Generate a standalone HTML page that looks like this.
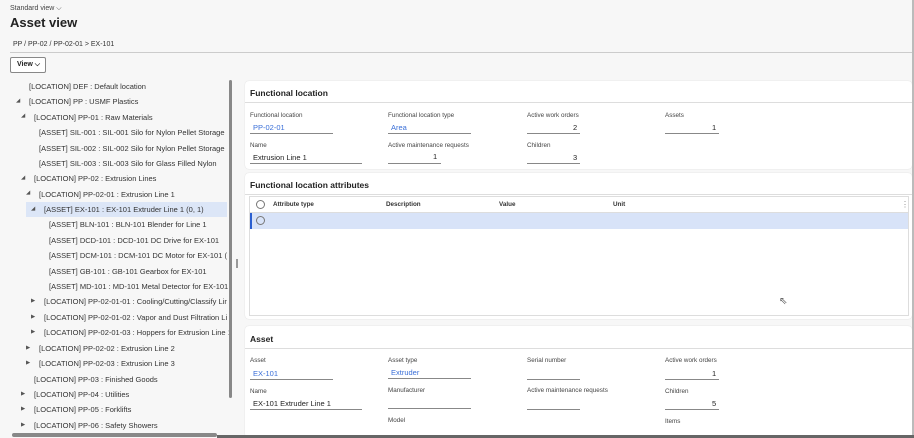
<!DOCTYPE html>
<html><head><meta charset="utf-8"><style>
*{box-sizing:border-box;margin:0;padding:0}
body{width:914px;height:438px;overflow:hidden;background:#f5f5f5;font-family:"Liberation Sans",sans-serif;color:#222;position:relative}
.a{position:absolute;white-space:nowrap}
.tr{font-size:7.5px;color:#333}
.ar{font-size:5.5px;color:#555}
.panel{position:absolute;background:#fff;border-radius:4px;box-shadow:0 0 1px #ccc}
.ph{position:absolute;left:0;right:0;border-bottom:1px solid #ddd}
.h{font-size:8.5px;font-weight:bold;color:#222}
.lb{font-size:6.3px;color:#444}
.ul{position:absolute;border-bottom:1px solid #888;height:0}
.v{font-size:7.5px}
.bl{color:#3a6fd8}
.gh{font-size:6.3px;font-weight:bold;color:#333}
.rc{position:absolute;width:9px;height:9px;border:1px solid #777;border-radius:50%}
</style></head><body>
<div class="a" style="left:0;top:0;width:914px;height:438px;background:#f7f7f7"></div>
<div class="a" style="left:10px;top:5px;font-size:7px;color:#444">Standard view ⌵</div>
<div class="a" style="left:10px;top:15px;font-size:13px;font-weight:bold">Asset view</div>
<div class="a" style="left:13px;top:41px;font-size:7px;color:#333">PP / PP-02 / PP-02-01 &gt; EX-101</div>
<div class="a" style="left:10px;top:52px;width:904px;border-top:1px solid #ccc"></div>
<div class="a" style="left:10px;top:57px;width:36px;height:16px;border:1px solid #888;border-radius:2px;background:#fff;font-size:7px;font-weight:bold;padding:3px 0 0 6px">View ⌵</div>

<div class="a" style="left:26px;top:202px;width:201px;height:15px;background:#dce6f7"></div>
<div class="a tr" style="left:29px;top:82px">[LOCATION] DEF : Default location</div>
<div class="a ar" style="left:16px;top:98px">◢</div><div class="a tr" style="left:29px;top:97px">[LOCATION] PP : USMF Plastics</div>
<div class="a ar" style="left:21px;top:113px">◢</div><div class="a tr" style="left:34px;top:113px">[LOCATION] PP-01 : Raw Materials</div>
<div class="a tr" style="left:39px;top:128px">[ASSET] SIL-001 : SIL-001 Silo for Nylon Pellet Storage</div>
<div class="a tr" style="left:39px;top:144px">[ASSET] SIL-002 : SIL-002 Silo for Nylon Pellet Storage</div>
<div class="a tr" style="left:39px;top:159px">[ASSET] SIL-003 : SIL-003 Silo for Glass Filled Nylon</div>
<div class="a ar" style="left:21px;top:175px">◢</div><div class="a tr" style="left:34px;top:174px">[LOCATION] PP-02 : Extrusion Lines</div>
<div class="a ar" style="left:26px;top:190px">◢</div><div class="a tr" style="left:39px;top:190px">[LOCATION] PP-02-01 : Extrusion Line 1</div>
<div class="a ar" style="left:31px;top:206px">◢</div><div class="a tr" style="left:44px;top:205px">[ASSET] EX-101 : EX-101 Extruder Line 1 (0, 1)</div>
<div class="a tr" style="left:49px;top:220px">[ASSET] BLN-101 : BLN-101 Blender for Line 1</div>
<div class="a tr" style="left:49px;top:236px">[ASSET] DCD-101 : DCD-101 DC Drive for EX-101</div>
<div class="a tr" style="left:49px;top:251px;width:178px;overflow:hidden">[ASSET] DCM-101 : DCM-101 DC Motor for EX-101 (1, 1)</div>
<div class="a tr" style="left:49px;top:267px">[ASSET] GB-101 : GB-101 Gearbox for EX-101</div>
<div class="a tr" style="left:49px;top:282px">[ASSET] MD-101 : MD-101 Metal Detector for EX-101</div>
<div class="a ar" style="left:31px;top:298px">▶</div><div class="a tr" style="left:44px;top:297px;width:183px;overflow:hidden">[LOCATION] PP-02-01-01 : Cooling/Cutting/Classify Line 1</div>
<div class="a ar" style="left:31px;top:314px">▶</div><div class="a tr" style="left:44px;top:313px;width:183px;overflow:hidden">[LOCATION] PP-02-01-02 : Vapor and Dust Filtration Line 1</div>
<div class="a ar" style="left:31px;top:329px">▶</div><div class="a tr" style="left:44px;top:328px">[LOCATION] PP-02-01-03 : Hoppers for Extrusion Line 1</div>
<div class="a ar" style="left:26px;top:345px">▶</div><div class="a tr" style="left:39px;top:344px">[LOCATION] PP-02-02 : Extrusion Line 2</div>
<div class="a ar" style="left:26px;top:360px">▶</div><div class="a tr" style="left:39px;top:359px">[LOCATION] PP-02-03 : Extrusion Line 3</div>
<div class="a tr" style="left:34px;top:375px">[LOCATION] PP-03 : Finished Goods</div>
<div class="a ar" style="left:21px;top:391px">▶</div><div class="a tr" style="left:34px;top:390px">[LOCATION] PP-04 : Utilities</div>
<div class="a ar" style="left:21px;top:406px">▶</div><div class="a tr" style="left:34px;top:405px">[LOCATION] PP-05 : Forklifts</div>
<div class="a ar" style="left:21px;top:422px">▶</div><div class="a tr" style="left:34px;top:421px">[LOCATION] PP-06 : Safety Showers</div>
<div class="a" style="left:229px;top:80px;width:3px;height:318px;background:#888;border-radius:2px"></div>
<div class="a" style="left:12px;top:433px;width:205px;height:4px;background:#888;border-radius:2px"></div>
<div class="a" style="left:236px;top:259px;width:2px;height:9px;background:#999"></div>

<div class="panel" style="left:245px;top:81px;width:667px;height:88px">
<div class="ph" style="top:0;height:22px"></div>
<div class="a h" style="left:5px;top:7px">Functional location</div>
<div class="a lb" style="left:5px;top:31px">Functional location</div>
<div class="a v bl" style="left:8px;top:42px">PP-02-01</div><div class="ul" style="left:5px;top:52px;width:83px"></div>
<div class="a lb" style="left:5px;top:61px">Name</div>
<div class="a v" style="left:8px;top:72px">Extrusion Line 1</div><div class="ul" style="left:5px;top:82px;width:112px"></div>
<div class="a lb" style="left:143px;top:31px">Functional location type</div>
<div class="a v bl" style="left:146px;top:42px">Area</div><div class="ul" style="left:143px;top:52px;width:83px"></div>
<div class="a lb" style="left:143px;top:61px">Active maintenance requests</div>
<div class="a v" style="left:188px;top:71px">1</div><div class="ul" style="left:143px;top:82px;width:53px"></div>
<div class="a lb" style="left:282px;top:31px">Active work orders</div>
<div class="a v" style="left:328px;top:42px">2</div><div class="ul" style="left:282px;top:52px;width:53px"></div>
<div class="a lb" style="left:282px;top:61px">Children</div>
<div class="a v" style="left:328px;top:72px">3</div><div class="ul" style="left:282px;top:82px;width:53px"></div>
<div class="a lb" style="left:420px;top:31px">Assets</div>
<div class="a v" style="left:467px;top:42px">1</div><div class="ul" style="left:420px;top:52px;width:54px"></div>
</div>

<div class="panel" style="left:245px;top:173px;width:667px;height:146px">
<div class="ph" style="top:0;height:22px"></div>
<div class="a h" style="left:5px;top:7px">Functional location attributes</div>
<div class="a" style="left:4px;top:23px;width:660px;height:120px;border:1px solid #ddd;background:#fff"></div>
<div class="a" style="left:5px;top:39px;width:658px;border-top:1px solid #ddd"></div>
<div class="rc" style="left:11px;top:27px"></div>
<div class="a gh" style="left:28px;top:28px">Attribute type</div>
<div class="a gh" style="left:141px;top:28px">Description</div>
<div class="a gh" style="left:254px;top:28px">Value</div>
<div class="a gh" style="left:368px;top:28px">Unit</div>
<div class="a" style="left:656px;top:27px;font-size:8px;color:#888">⋮</div>
<div class="a" style="left:5px;top:40px;width:658px;height:16px;background:#d8e3f8"></div>
<div class="a" style="left:5px;top:40px;width:2px;height:16px;background:#2b5fd0"></div>
<div class="rc" style="left:11px;top:43px"></div>
</div>
<div class="a" style="left:779px;top:296px;font-size:10px;color:#555">⇖</div>

<div class="panel" style="left:245px;top:326px;width:667px;height:112px">
<div class="ph" style="top:0;height:23px"></div>
<div class="a h" style="left:5px;top:8px">Asset</div>
<div class="a lb" style="left:5px;top:31px">Asset</div>
<div class="a v bl" style="left:8px;top:43px">EX-101</div><div class="ul" style="left:5px;top:53px;width:83px"></div>
<div class="a lb" style="left:5px;top:62px">Name</div>
<div class="a v" style="left:8px;top:73px">EX-101 Extruder Line 1</div><div class="ul" style="left:5px;top:83px;width:112px"></div>
<div class="a lb" style="left:143px;top:31px">Asset type</div>
<div class="a v bl" style="left:146px;top:42px">Extruder</div><div class="ul" style="left:143px;top:52px;width:83px"></div>
<div class="a lb" style="left:143px;top:61px">Manufacturer</div><div class="ul" style="left:143px;top:82px;width:83px"></div>
<div class="a lb" style="left:143px;top:91px">Model</div>
<div class="a lb" style="left:282px;top:31px">Serial number</div><div class="ul" style="left:282px;top:53px;width:53px"></div>
<div class="a lb" style="left:282px;top:61px">Active maintenance requests</div><div class="ul" style="left:282px;top:83px;width:53px"></div>
<div class="a lb" style="left:420px;top:31px">Active work orders</div>
<div class="a v" style="left:467px;top:43px">1</div><div class="ul" style="left:420px;top:53px;width:54px"></div>
<div class="a lb" style="left:420px;top:62px">Children</div>
<div class="a v" style="left:467px;top:73px">5</div><div class="ul" style="left:420px;top:83px;width:54px"></div>
<div class="a lb" style="left:420px;top:92px">Items</div>
</div>
<div class="a" style="left:912px;top:0;width:2px;height:438px;background:#bbb"></div>
<div class="a" style="left:217px;top:435px;width:697px;height:3px;background:#666"></div>
</body></html>
